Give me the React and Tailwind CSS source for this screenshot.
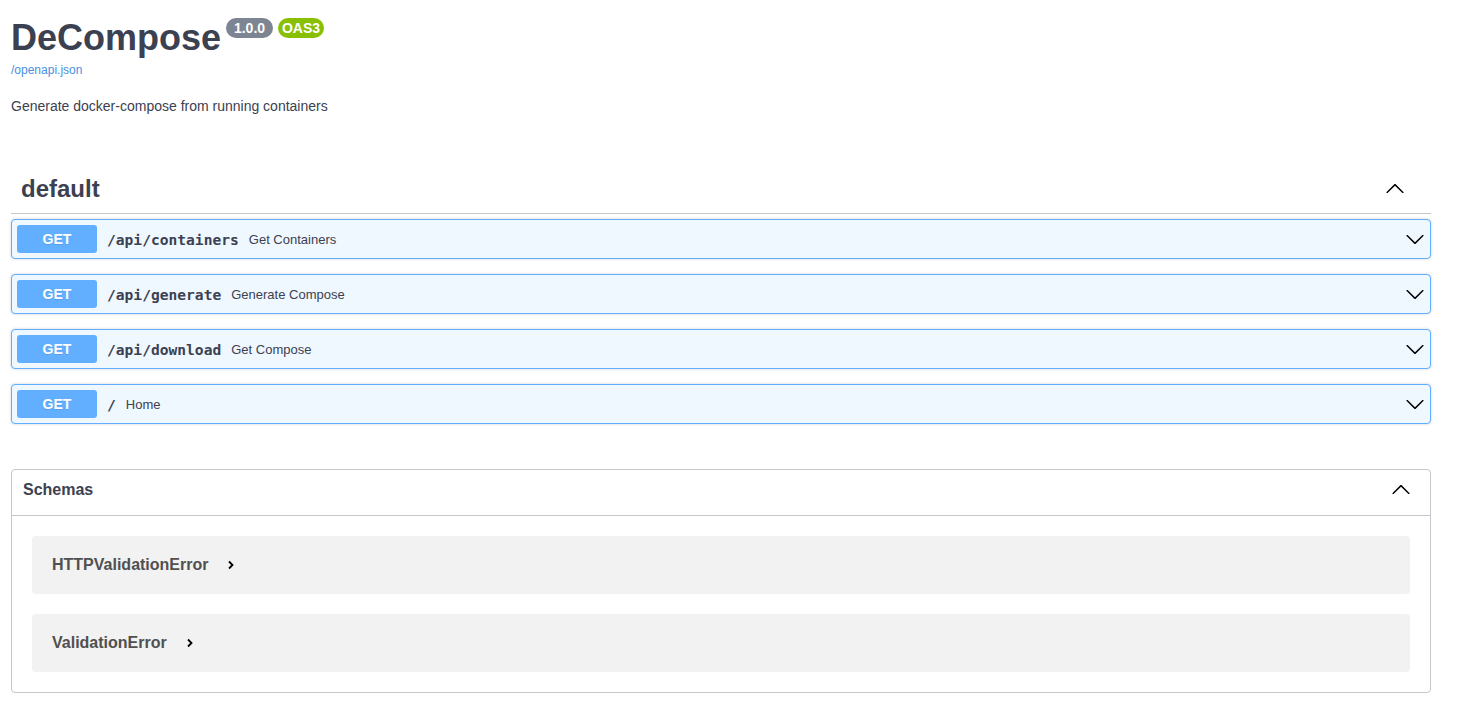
// Swagger-style API docs page for the DeCompose service.
const endpoints = [
  { method: "GET", path: "/api/containers", summary: "Get Containers" },
  { method: "GET", path: "/api/generate", summary: "Generate Compose" },
  { method: "GET", path: "/api/download", summary: "Get Compose" },
  { method: "GET", path: "/", summary: "Home" },
];

const schemas = ["HTTPValidationError", "ValidationError"];

function Chevron({ up = false }) {
  return (
    <svg width="20" height="20" viewBox="0 0 20 20" className={up ? "shrink-0 rotate-180" : "shrink-0"}>
      <path
        fill="#000"
        d="M17.418 6.109c.272-.268.709-.268.979 0s.271.701 0 .969l-7.908 7.83c-.27.268-.707.268-.979 0l-7.908-7.83c-.27-.268-.27-.701 0-.969.271-.268.709-.268.979 0L10 13.25l7.418-7.141z"
      />
    </svg>
  );
}

function Operation({ method, path, summary }) {
  return (
    <div className="mb-[15px] flex h-[40px] items-center rounded-[4px] border border-[#61affe] bg-[#eff7ff] p-[5px] shadow-[0_0_3px_rgba(0,0,0,0.19)]">
      <span className="flex h-[28px] w-[80px] shrink-0 items-center justify-center rounded-[3px] bg-[#61affe] text-[14px] font-bold text-white [text-shadow:0_1px_0_rgba(0,0,0,0.1)]">
        {method}
      </span>
      <span className="px-[10px] pt-[1px] font-['DejaVu_Sans_Mono',monospace] text-[14.6px] font-bold text-[#3b4151]">
        {path}
      </span>
      <span className="pt-[1px] text-[13px] text-[#3b4151]">{summary}</span>
      <div className="ml-auto">
        <Chevron />
      </div>
    </div>
  );
}

export default function App() {
  return (
    <main className="min-h-screen bg-white font-['Liberation_Sans',Arial,sans-serif] text-[#3b4151]">
      <div className="ml-[11px] w-[1420px] pt-[20px]">
        <div className="flex items-start">
          <h2 className="text-[36px] font-bold leading-[36px]">DeCompose</h2>
          <span className="-mt-[2px] ml-[5px] h-[20px] rounded-full bg-[#7d8492] px-[4px] text-[14px] font-bold leading-[20px] whitespace-pre text-white">
            {" 1.0.0 "}
          </span>
          <span className="-mt-[2px] ml-[5px] h-[20px] rounded-full bg-[#89bf04] px-[4px] text-[14px] font-bold leading-[20px] text-white">
            OAS3
          </span>
        </div>
        <a href="#" className="mt-[6px] block text-[12px] leading-[16px] text-[#4990e2]">
          /openapi.json
        </a>
        <p className="mt-[18px] text-[14px] leading-[20px]">Generate docker-compose from running containers</p>

        <section className="mt-[47px]">
          <div className="flex items-center justify-between border-b border-[#c4c6cb] pb-[8px] pl-[10px] pr-[26px] pt-[10px]">
            <h3 className="text-[24px] font-bold leading-[32px]">default</h3>
            <Chevron up />
          </div>
          <div className="mt-[5px]">
            {endpoints.map((op) => (
              <Operation key={op.path} {...op} />
            ))}
          </div>
        </section>

        <section className="mt-[45px] rounded-[4px] border border-[#c4c6cb]">
          <div className="flex h-[46px] items-start justify-between border-b border-[#c4c6cb] pl-[11px] pr-[19px] pt-[10px]">
            <h4 className="text-[16px] font-bold leading-[20px]">Schemas</h4>
            <Chevron up />
          </div>
          <div className="flex flex-col gap-[20px] px-[20px] py-[20px]">
            {schemas.map((name) => (
              <div key={name} className="flex h-[58px] items-center rounded-[4px] bg-[#f2f2f2] pl-[20px]">
                <span className="text-[16px] font-bold text-[#505050]">{name}</span>
                <svg width="8" height="10" viewBox="0 0 8 10" className="ml-[19px]">
                  <path d="M2 1.5 5.5 5 2 8.5" fill="none" stroke="#000" strokeWidth="1.8" />
                </svg>
              </div>
            ))}
          </div>
        </section>
      </div>
    </main>
  );
}
